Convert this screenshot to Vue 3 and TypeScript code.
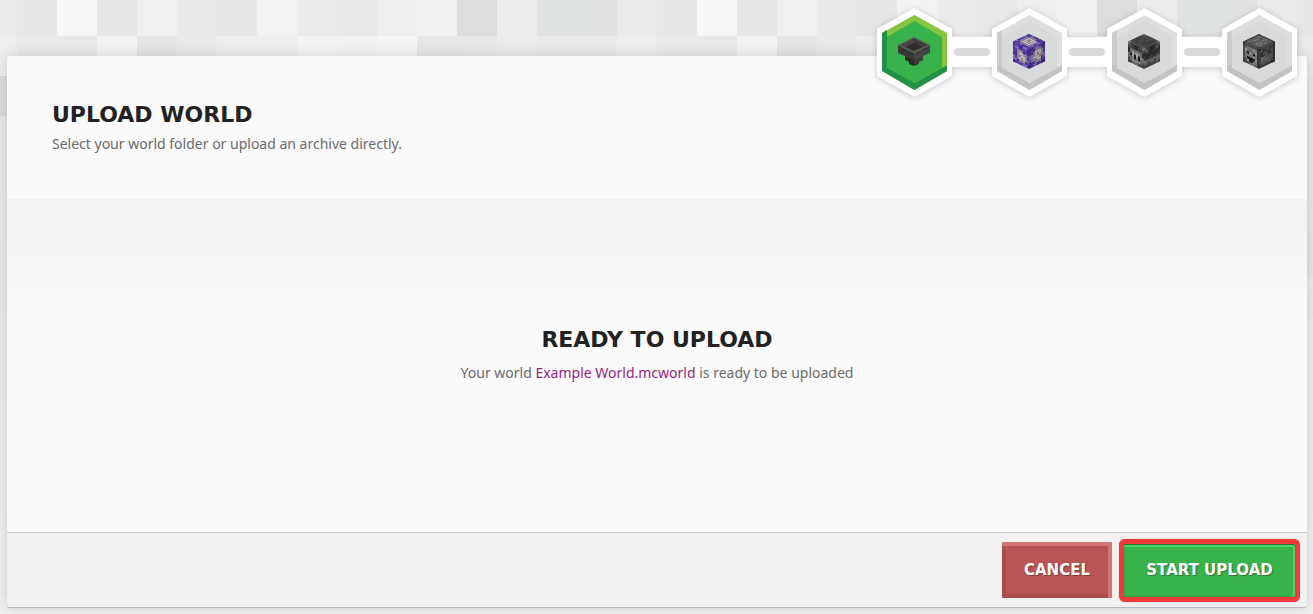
<script setup lang="ts">
interface Face {
  side: 'top' | 'left' | 'right'
  transform: string
  cells: string[]
}
interface Step {
  name: string
  active: boolean
  faces: Face[]
  colors: Record<string, string>
}

const TOP = 'matrix(2 .95 -2 .95 16 0)'
const LEFT = 'matrix(2 .95 0 2.45 0 7.6)'
const RIGHT = 'matrix(2 -.95 0 2.45 16 15.2)'

function cube(top: string[], left: string[], right: string[]): Face[] {
  return [
    { side: 'top', transform: TOP, cells: top },
    { side: 'left', transform: LEFT, cells: left },
    { side: 'right', transform: RIGHT, cells: right },
  ]
}

const steps: Step[] = [
  { name: 'Upload world', active: true, faces: [], colors: {} },
  {
    name: 'Configure conversion',
    active: false,
    colors: { p: '#5d43ab', d: '#3f2a88', l: '#8069c2', w: '#c4c2c4', g: '#8f8b94', r: '#b98078', v: '#4d3597' },
    faces: cube(
      ['pplvvppp', 'pvgggvdp', 'lgwwwwgl', 'pgwrwwgp', 'pgwwrwgv', 'vgwwwwgl', 'lvgggggp', 'ppplvvpp'],
      ['vppdvllv', 'pllvvppd', 'vpgggvpd', 'pvgwwggp', 'dvgrwwgv', 'lpgwrwgl', 'llvgggvp', 'dvppvlld'],
      ['dvpllvvd', 'vpvgggvv', 'vvgwwwgp', 'lggwrwgv', 'lgwwwrgl', 'pggrwwvl', 'dvpgggpv', 'dvllvpdd'],
    ),
  },
  {
    name: 'Convert world',
    active: false,
    colors: { a: '#292929', b: '#383838', c: '#464646', d: '#6b6b6b', e: '#858582', f: '#141414', y: '#aaa693' },
    faces: cube(
      ['dcccccce', 'cbcbcbbc', 'bcbbcbbc', 'cbcbcbbc', 'bbcbbbbc', 'cbbcbbcb', 'ccbbcbcb', 'eccccccd'],
      ['dcbaabcd', 'ccbaabbc', 'adddddda', 'adyeyeda', 'dfyfyfed', 'ddefefdd', 'cdeeeedc', 'bcdddccb'],
      ['dcbaabcd', 'cdbaabdc', 'abbabbba', 'baabaaab', 'cbbcbbcc', 'eddddddd', 'ddcddcdd', 'ccccccdc'],
    ),
  },
  {
    name: 'Download world',
    active: false,
    colors: { a: '#303030', b: '#454545', c: '#5a5a5a', d: '#737373', e: '#969696', f: '#111111', g: '#505050' },
    faces: cube(
      ['abbbbbba', 'bdccdccb', 'bccbdccb', 'bcdccgdb', 'bcdgcdgb', 'bccgdcdb', 'bdgccdcb', 'abbbbbba'],
      ['abbbbbba', 'bcdddeda', 'bedcddea', 'bdfedfda', 'bddddeda', 'bdffffea', 'bceffdda', 'abbcddca'],
      ['abbbbbba', 'bcabcaba', 'bacgabca', 'babcbaba', 'bddcccca', 'bdcdccca', 'bcccccba', 'abbbbbaa'],
    ),
  },
]

const topRow = [
  '#e8eaeb', '#e5e8e6', '#f6f6f6', '#e5e7e5', '#eff1f0', '#e8e9e8', '#e5e7e6', '#f2f2f2',
  '#ebebeb', '#e7e8ea', '#eeeeee', '#eff0ef', '#dcddde', '#ececec', '#dfe3e3', '#e1e3e1',
]
const secondRow = [
  '#edefee', '#e8eaec', '#e8eae9', '#f2f2f2', '#e4e6e4', '#e8eae8', '#eceeed', '#ecedef',
  '#f3f3f3', '#f0f2f1', '#f3f5f4', '#e6e8e7', '#e7e9e8', '#ebebeb', '#e9e9e9', '#e9eae9',
]
const lowerRows = [
  '#dadbdc', '#e8eae9', '#e9e9e9', '#eaeaea', '#e9ebea', '#eaeaea', '#ebedec', '#ececec',
  '#ededed', '#edeeee', '#eeeeee', '#eeefef', '#efefef', '#f0f0f0',
]

interface Tile { x: number; y: number; fill: string }
const tiles: Tile[] = []
for (let col = 0; col < 64; col++) {
  const x = col * 40 - 23
  tiles.push({ x, y: -4, fill: topRow[col % 16] })
  tiles.push({ x, y: 36, fill: secondRow[col % 16] })
  lowerRows.forEach((fill, row) => {
    const shade = col > 0 && row < 5 ? '#e5e7e6' : fill
    tiles.push({ x, y: 76 + row * 40, fill: shade })
  })
}
</script>

<template>
  <div class="page">
    <svg class="backdrop" aria-hidden="true" shape-rendering="crispEdges">
      <rect v-for="(t, i) in tiles" :key="i" :x="t.x" :y="t.y" width="40" height="40" :fill="t.fill" />
    </svg>

    <main class="card">
      <header class="intro">
        <h1>UPLOAD WORLD</h1>
        <p>Select your world folder or upload an archive directly.</p>
      </header>
      <section class="ready">
        <h2>READY TO UPLOAD</h2>
        <p>Your world <span class="file">Example World.mcworld</span> is ready to be uploaded</p>
      </section>
      <footer class="actions">
        <button type="button" class="btn cancel">CANCEL</button>
        <button type="button" class="btn start">START UPLOAD</button>
      </footer>
    </main>

    <ol class="steps">
      <li v-for="step in steps" :key="step.name" class="step" :class="{ active: step.active }" :aria-label="step.name">
        <svg class="hex" width="75" height="89" viewBox="0 0 75 89" aria-hidden="true">
          <polygon class="rim" points="37.5,0 75,21 75,68 37.5,89 0,68 0,21" />
          <polygon class="light" points="37.5,7 70,25 70,63 37.5,82 5,63 5,25" />
          <polygon class="side" points="5,25 10,22 10,60 5,63" />
          <polygon class="dark" points="5,57 10,57 37.5,75 65,60 70,57 70,63 37.5,82 5,63" />
          <polygon class="fill" points="37.5,13 65,29 65,60 37.5,75 10,60 10,29" />
        </svg>
        <svg v-if="step.active" class="block" width="32" height="30" viewBox="0 0 32 30" aria-hidden="true">
          <polygon points="11,22 16,24 16,29 11,27" fill="#2b292a" />
          <polygon points="16,24 21,22 21,27 16,29" fill="#3b393a" />
          <polygon points="7,17 16,21 16,27 7,23" fill="#2d2b2c" />
          <polygon points="16,21 25,17 25,23 16,27" fill="#3d3a3b" />
          <polygon points="0,8 16,16 16,23 0,16" fill="#393738" />
          <polygon points="16,16 32,8 32,16 16,23" fill="#474446" />
          <polygon points="16,0 32,8 16,16 0,8" fill="#5b5859" />
          <polygon points="16,2 29,8 16,14 3,8" fill="#302d2f" />
          <polygon points="16,2 29,8 25,10 16,6" fill="#3f3c3d" />
          <polygon points="16,2 3,8 7,10 16,6" fill="#494647" />
          <path d="M2 12l5 2m3 2l5 2m3-1l4-2m3-2l5-2M9 20l4 2" fill="none" stroke="#2d2b2c" />
        </svg>
        <svg v-else class="block" width="32" height="36" viewBox="0 0 32 36" aria-hidden="true">
          <g v-for="face in step.faces" :key="face.side" :transform="face.transform">
            <rect width="8" height="8" :fill="step.colors.d" />
            <template v-for="(line, y) in face.cells" :key="y">
              <rect
                v-for="(cell, x) in line.split('')"
                :key="x"
                :x="x"
                :y="y"
                width="1"
                height="1"
                :fill="step.colors[cell]"
              />
            </template>
            <rect v-if="face.side === 'right'" width="8" height="8" fill="#000" opacity=".12" />
          </g>
        </svg>
      </li>
    </ol>
  </div>
</template>

<style>
body {
  margin: 0;
  background: #efefef;
}
</style>

<style scoped>
.page {
  position: relative;
  box-sizing: border-box;
  display: flex;
  min-height: 100vh;
  padding: 56px 6px 7px 7px;
  overflow: hidden;
  font-family: "Noto Sans", "Open Sans", sans-serif;
  font-size: 14px;
  line-height: 20px;
  color: #6a6a6a;
}
.backdrop {
  position: absolute;
  inset: 0;
  width: 100%;
  height: 100%;
}
.card {
  position: relative;
  display: flex;
  flex: 1;
  flex-direction: column;
  border-radius: 3px;
  background: #fafafa;
  box-shadow: 0 1px 1px rgba(0, 0, 0, 0.2), 0 0 16px rgba(0, 0, 0, 0.13);
}
h1,
h2,
p {
  margin: 0;
}
h1,
h2 {
  font: bold 22px/30px "DejaVu Sans", sans-serif;
  color: #222;
}
.intro {
  padding: 44px 45px 45px;
}
.intro p {
  margin-top: 4px;
}
.ready {
  display: flex;
  flex: 1;
  flex-direction: column;
  align-items: center;
  justify-content: center;
  gap: 8px;
  padding: 24px 24px 48px;
  background: linear-gradient(#f2f2f2, #fafafa 120px);
}
.ready p {
  text-align: center;
}
.file {
  color: #93267d;
}
.actions {
  display: flex;
  align-items: center;
  justify-content: flex-end;
  gap: 12px;
  padding: 9px 12px;
  border-top: 1px solid #c9c9c9;
  border-radius: 0 0 3px 3px;
  background: #f1f1f1;
}
.btn {
  box-sizing: border-box;
  height: 56px;
  padding: 0 16px;
  border: 0;
  font: bold 15px/20px "DejaVu Sans", sans-serif;
  color: #fff;
  text-shadow: 1px 1px 1px rgba(0, 0, 0, 0.35);
  white-space: nowrap;
  cursor: pointer;
}
.cancel {
  min-width: 110px;
  background: #b95554;
  box-shadow: inset 0 4px #d37474, inset -4px 0 #d37474, inset 4px 0 #ab4d4c, inset 0 -4px #ab4d4c;
}
.start {
  min-width: 171px;
  height: 53px;
  border-radius: 2px;
  background: #38b24a;
  box-shadow: inset 0 1px #237c36, inset 0 3px #4bd265, inset -2px 0 #4bd265, inset 1px -1px #30a342,
    0 0 0 5px #f23a3a, 0 0 1px 5px rgba(0, 0, 0, 0.5);
}
.steps {
  position: absolute;
  top: 8px;
  right: 16px;
  display: flex;
  gap: 40px;
  margin: 0;
  padding: 0;
  list-style: none;
  filter: drop-shadow(0 1px 3px rgba(0, 0, 0, 0.2));
}
.step {
  position: relative;
  width: 75px;
  height: 89px;
}
.step + .step::before,
.step + .step::after {
  position: absolute;
  content: "";
}
.step + .step::before {
  top: 29px;
  left: -40px;
  width: 40px;
  height: 30px;
  background: #fff;
}
.step + .step::after {
  top: 40px;
  left: -38px;
  width: 36px;
  height: 8px;
  border-radius: 4px;
  background: #d8dad9;
}
.hex {
  display: block;
}
.block {
  position: absolute;
  top: 26px;
  left: 21px;
}
.active .block {
  top: 29px;
}
.rim {
  fill: #fff;
}
.light {
  fill: #dededf;
}
.side {
  fill: #cccccd;
}
.dark {
  fill: #c2c3c3;
}
.fill {
  fill: #d8dad9;
}
.active .light {
  fill: #87c540;
}
.active .side {
  fill: #239047;
}
.active .dark {
  fill: #239047;
}
.active .fill {
  fill: #38b24a;
}
</style>
